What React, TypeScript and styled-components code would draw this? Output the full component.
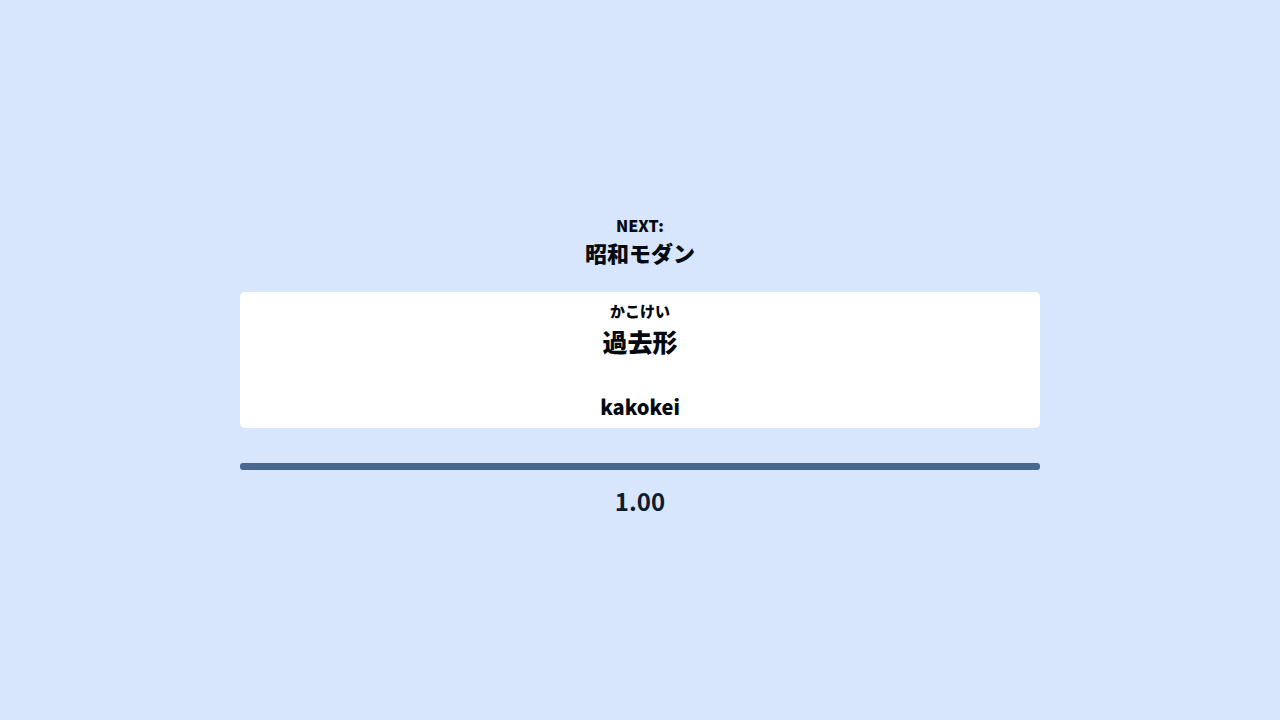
import React from "react";
import styled, { createGlobalStyle } from "styled-components";

const GlobalStyle = createGlobalStyle`
  html, body {
    margin: 0;
    padding: 0;
    background: #d7e5fd;
  }
  body {
    font-family: "Noto Sans CJK JP", "Noto Sans", sans-serif;
    color: #050a12;
  }
`;

const Page = styled.div`
  width: 100%;
  height: 720px;
  box-sizing: border-box;
  padding-top: 215px;
  display: flex;
  justify-content: center;
`;

const Column = styled.div`
  width: 800px;
  display: flex;
  flex-direction: column;
  align-items: center;
`;

const NextLabel = styled.div`
  font-size: 16px;
  font-weight: 900;
  line-height: 20px;
`;

const NextWord = styled.div`
  margin-top: 1px;
  font-size: 22px;
  font-weight: 900;
  line-height: 32px;
  margin-bottom: 24px;
`;

const Card = styled.div`
  width: 100%;
  box-sizing: border-box;
  background: #ffffff;
  border-radius: 5px;
  padding: 9px 0 7px;
  display: flex;
  flex-direction: column;
  align-items: center;
`;

const Reading = styled.div`
  font-size: 15px;
  font-weight: 900;
  line-height: 20px;
`;

const Word = styled.div`
  margin-top: 3px;
  font-size: 25px;
  font-weight: 900;
  line-height: 34px;
`;

const Romaji = styled.div`
  margin-top: 35px;
  font-size: 20px;
  font-weight: 900;
  line-height: 28px;
`;

const Track = styled.div`
  width: 100%;
  height: 7px;
  margin-top: 35px;
  border-radius: 3px;
  background: #d7e5fd;
  overflow: hidden;
`;

const Fill = styled.div`
  height: 100%;
  background: #48698f;
`;

const Timer = styled.div`
  margin-top: 15px;
  font-size: 24px;
  font-weight: 700;
  line-height: 32px;
  color: #0d1c30;
`;

export default function App() {
  const progress = 1;
  return (
    <>
      <GlobalStyle />
      <Page>
        <Column>
          <NextLabel>NEXT:</NextLabel>
          <NextWord>昭和モダン</NextWord>
          <Card>
            <Reading>かこけい</Reading>
            <Word>過去形</Word>
            <Romaji>kakokei</Romaji>
          </Card>
          <Track>
            <Fill style={{ width: `${progress * 100}%` }} />
          </Track>
          <Timer>{progress.toFixed(2)}</Timer>
        </Column>
      </Page>
    </>
  );
}
